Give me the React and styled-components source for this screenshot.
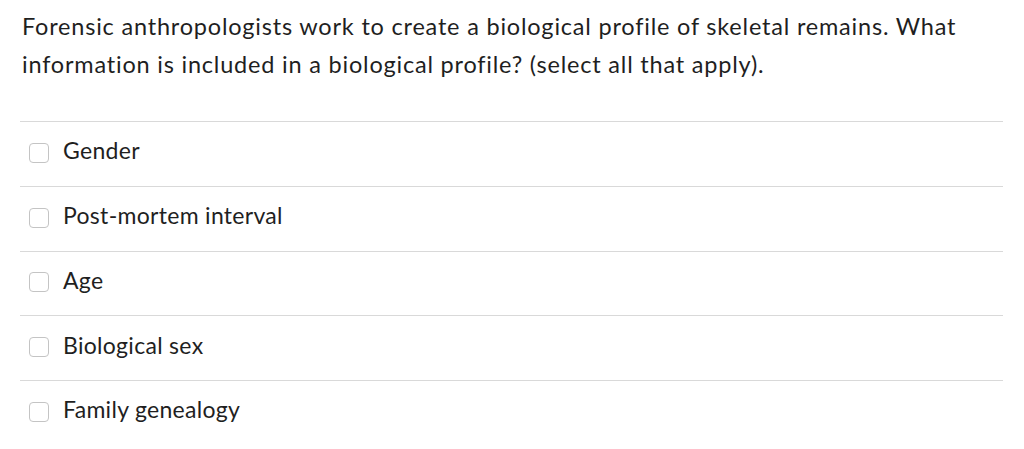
import React from "react";
import styled, { createGlobalStyle } from "styled-components";

const GlobalStyle = createGlobalStyle`
  body {
    margin: 0;
    background: #fff;
    font-family: "Lato", "Liberation Sans", sans-serif;
    color: #1f1f1f;
  }
`;

const options = [
  "Gender",
  "Post-mortem interval",
  "Age",
  "Biological sex",
  "Family genealogy",
];

const App = () => {
  return (
    <>
      <GlobalStyle />
      <Wrapper>
        <Question>
          Forensic anthropologists work to create a biological profile of
          skeletal remains. What information is included in a biological
          profile? (select all that apply).
        </Question>
        <OptionList>
          {options.map((label) => (
            <Option key={label}>
              <Box type="checkbox" />
              <Label>{label}</Label>
            </Option>
          ))}
        </OptionList>
      </Wrapper>
    </>
  );
};

const Wrapper = styled.div`
  width: 983px;
  padding: 7px 0 0 20px;
`;

const Question = styled.p`
  margin: 0 0 38px 2px;
  font-size: 23.5px;
  letter-spacing: 0.8px;
  line-height: 38px;
  width: 975px;
`;

const OptionList = styled.div`
  display: flex;
  flex-direction: column;
`;

const Option = styled.label`
  display: flex;
  align-items: center;
  height: 63.75px;
  border-top: 1px solid #d9d9d9;
  padding-left: 9px;
`;

const Box = styled.input`
  appearance: none;
  width: 20px;
  height: 20px;
  margin: 0 14px 2px 0;
  border: 1px solid #c4c4c4;
  border-radius: 4px;
  background: #fff;
  flex-shrink: 0;
`;

const Label = styled.span`
  font-size: 23px;
  letter-spacing: 0.3px;
  padding-bottom: 7px;
  color: #1f1f1f;
`;

export default App;
